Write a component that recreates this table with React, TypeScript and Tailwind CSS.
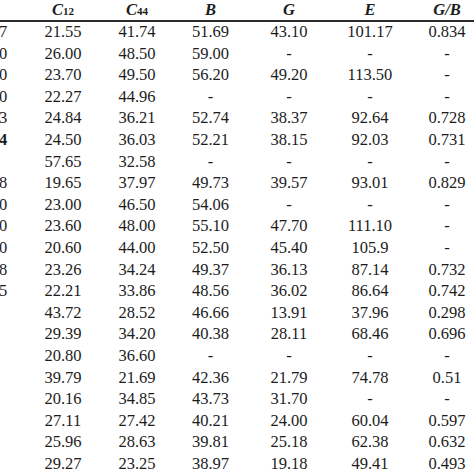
const rows: string[][] = [
  ["7", "21.55", "41.74", "51.69", "43.10", "101.17", "0.834"],
  ["0", "26.00", "48.50", "59.00", "-", "-", "-"],
  ["0", "23.70", "49.50", "56.20", "49.20", "113.50", "-"],
  ["0", "22.27", "44.96", "-", "-", "-", "-"],
  ["3", "24.84", "36.21", "52.74", "38.37", "92.64", "0.728"],
  ["4", "24.50", "36.03", "52.21", "38.15", "92.03", "0.731"],
  ["", "57.65", "32.58", "-", "-", "-", "-"],
  ["8", "19.65", "37.97", "49.73", "39.57", "93.01", "0.829"],
  ["0", "23.00", "46.50", "54.06", "-", "-", "-"],
  ["0", "23.60", "48.00", "55.10", "47.70", "111.10", "-"],
  ["0", "20.60", "44.00", "52.50", "45.40", "105.9", "-"],
  ["8", "23.26", "34.24", "49.37", "36.13", "87.14", "0.732"],
  ["5", "22.21", "33.86", "48.56", "36.02", "86.64", "0.742"],
  ["", "43.72", "28.52", "46.66", "13.91", "37.96", "0.298"],
  ["", "29.39", "34.20", "40.38", "28.11", "68.46", "0.696"],
  ["", "20.80", "36.60", "-", "-", "-", "-"],
  ["", "39.79", "21.69", "42.36", "21.79", "74.78", "0.51"],
  ["", "20.16", "34.85", "43.73", "31.70", "-", "-"],
  ["", "27.11", "27.42", "40.21", "24.00", "60.04", "0.597"],
  ["", "25.96", "28.63", "39.81", "25.18", "62.38", "0.632"],
  ["", "29.27", "23.25", "38.97", "19.18", "49.41", "0.493"],
];

const cols = "grid grid-cols-[26px_74px_74px_73px_84px_78px_76px]";

export default function App() {
  return (
    <div className="w-[474px] h-[474px] overflow-hidden bg-white text-[#1c1c1c] text-[16.5px] font-['Liberation_Serif','Times_New_Roman',serif]">
      <div className={`${cols} h-[20px] items-center font-bold italic leading-none`}>
        <div />
        <div className="text-center">
          C<span className="not-italic text-[11px]">12</span>
        </div>
        <div className="text-center">
          C<span className="not-italic text-[11px]">44</span>
        </div>
        <div className="text-center">B</div>
        <div className="text-center">G</div>
        <div className="text-center">E</div>
        <div className="text-center">G/B</div>
      </div>
      <div className="h-[1.5px] w-full bg-[#2a2a2a]" />
      {rows.map((r, i) => (
        <div key={i} className={`${cols} h-[21.6px] items-center leading-none`}>
          <div className={`text-left -ml-[1px] ${i === 5 ? "font-bold" : ""}`}>{r[0]}</div>
          {r.slice(1).map((v, j) => (
            <div key={j} className="text-center">
              {v}
            </div>
          ))}
        </div>
      ))}
    </div>
  );
}
